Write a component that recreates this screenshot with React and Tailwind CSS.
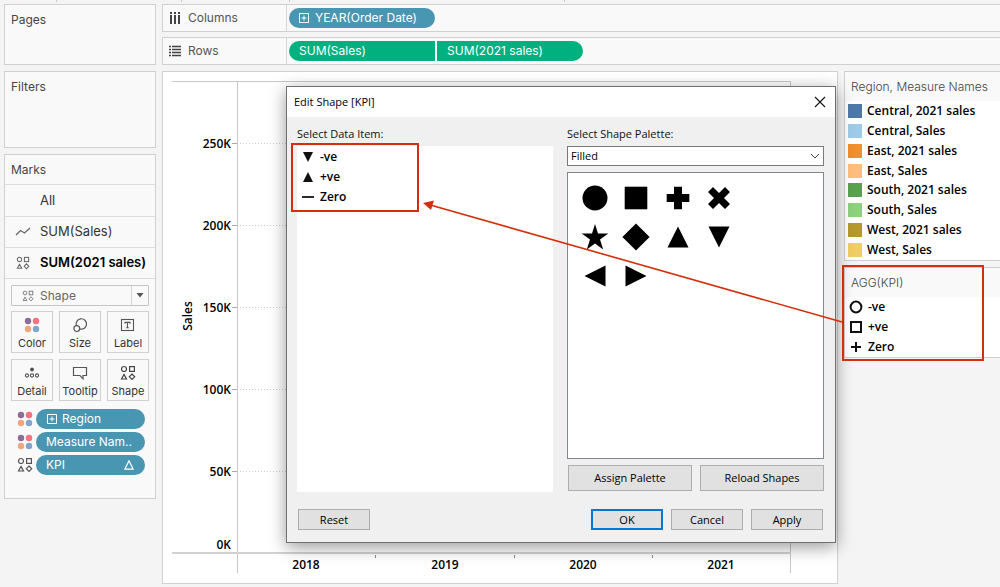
import React from "react";

const DOTS = [
  { cx: 4, cy: 4, fill: "#8a6d96" },
  { cx: 12, cy: 4, fill: "#f6707f" },
  { cx: 4, cy: 12, fill: "#f2a57c" },
  { cx: 12, cy: 12, fill: "#82a5cb" },
];

function ColorIcon() {
  return (
    <svg viewBox="0 0 16 16" className="h-4 w-4 shrink-0" aria-hidden="true">
      {DOTS.map((d) => (
        <circle key={d.fill} cx={d.cx} cy={d.cy} r="3.2" fill={d.fill} />
      ))}
    </svg>
  );
}

function ShapeIcon({ className = "h-4 w-4" }) {
  return (
    <svg viewBox="0 0 16 16" className={`shrink-0 ${className}`} fill="none" stroke="currentColor" strokeWidth="1.2" aria-hidden="true">
      <circle cx="4" cy="4" r="2.5" />
      <rect x="9.6" y="1.6" width="4.8" height="4.8" />
      <path d="M4 9.4 6.5 14H1.5Z" />
      <path d="M12 9 14.7 11.8 12 14.5 9.3 11.8Z" />
    </svg>
  );
}

function LineIcon() {
  return (
    <svg viewBox="0 0 16 10" className="h-[10px] w-4" fill="none" stroke="#666" strokeWidth="1.2" aria-hidden="true">
      <path d="M1 8 5.5 3.5 9.5 6 15 1" />
    </svg>
  );
}

function SizeIcon() {
  return (
    <svg viewBox="0 0 16 16" className="h-4 w-4" fill="none" stroke="#555" strokeWidth="1.2" aria-hidden="true">
      <path d="M4.3 8.4A5.2 5.2 0 1 1 8 12" />
      <circle cx="4.8" cy="11.6" r="2.9" />
    </svg>
  );
}

function LabelIcon() {
  return (
    <svg viewBox="0 0 16 16" className="h-4 w-4" fill="none" stroke="#555" strokeWidth="1.1" aria-hidden="true">
      <rect x="1.5" y="2.5" width="12" height="11" />
      <path d="M5 6.8V5.4H10V6.8M7.5 5.4V10.6M6.2 10.8H8.8" />
    </svg>
  );
}

function DetailIcon() {
  return (
    <svg viewBox="0 0 16 16" className="h-4 w-4" fill="none" stroke="#555" strokeWidth="1.1" aria-hidden="true">
      <circle cx="8" cy="4.5" r="2" fill="#555" stroke="none" />
      <circle cx="3" cy="10.5" r="1.6" />
      <circle cx="8" cy="10.5" r="1.6" />
      <circle cx="13" cy="10.5" r="1.6" />
    </svg>
  );
}

function TooltipIcon() {
  return (
    <svg viewBox="0 0 16 16" className="h-4 w-4" fill="none" stroke="#555" strokeWidth="1.2" aria-hidden="true">
      <path d="M1.5 2.5H14.5V10.5H11V13.8L8 10.5H1.5Z" />
    </svg>
  );
}

function PlusBox() {
  return (
    <svg viewBox="0 0 10 10" className="h-[10px] w-[10px] shrink-0" fill="none" stroke="#fff" strokeWidth="1" aria-hidden="true">
      <path d="M.5 .5H9.5V9.5H.5ZM5 2.5V7.5M2.5 5H7.5" />
    </svg>
  );
}

function Card({ title, className = "" }) {
  return (
    <section className={`border border-[#d0d0d0] bg-[#f9f9f9] px-[6px] py-[7px] ${className}`}>
      <h2 className="text-xs leading-4 text-[#444]">{title}</h2>
    </section>
  );
}

const MARK_BUTTONS = [
  { label: "Color", icon: <ColorIcon /> },
  { label: "Size", icon: <SizeIcon /> },
  { label: "Label", icon: <LabelIcon /> },
  { label: "Detail", icon: <DetailIcon /> },
  { label: "Tooltip", icon: <TooltipIcon /> },
  { label: "Shape", icon: <ShapeIcon className="h-4 w-4 text-[#444]" /> },
];

function MarksCard() {
  return (
    <section className="h-[345px] border border-[#d0d0d0] bg-[#f9f9f9]">
      <h2 className="px-[6px] pt-[7px] pb-[6px] text-xs leading-4 text-[#444]">Marks</h2>
      <button className="flex h-8 w-full items-center border-t border-[#dcdcdc] pl-[35px] text-[13px] text-[#333]">All</button>
      <button className="flex h-[31px] w-full items-center gap-[9px] border-t border-[#dcdcdc] pl-[10px] text-[13px] text-[#333]">
        <LineIcon />
        SUM(Sales)
      </button>
      <button className="flex h-8 w-full items-center gap-[9px] border-y border-[#dcdcdc] pl-[10px] text-[13px] font-semibold text-black">
        <span className="flex w-4 justify-center">
          <ShapeIcon className="h-[14px] w-[14px] text-[#666]" />
        </span>
        SUM(2021 sales)
      </button>
      <div className="px-[6px] pt-[6px]">
        <div className="relative text-[#777]">
          <select aria-label="Mark type" className="block h-[21px] w-full appearance-none rounded-[1px] border border-[#c4c4c4] bg-[#f9f9f9] pl-7 text-xs text-[#666]">
            <option>Shape</option>
          </select>
          <span className="pointer-events-none absolute inset-y-0 left-[11px] flex items-center">
            <ShapeIcon className="h-3 w-3" />
          </span>
          <span className="pointer-events-none absolute inset-y-px right-px flex w-[17px] items-center justify-center border-l border-[#d4d4d4]">
            <svg viewBox="0 0 8 5" className="h-[5px] w-2" aria-hidden="true">
              <path d="M.5 0H7.5L4 4.5Z" fill="#555" />
            </svg>
          </span>
        </div>
        <div className="grid grid-cols-3 gap-[6px] pt-[5px]">
          {MARK_BUTTONS.map((b) => (
            <button key={b.label} className="flex h-[42px] flex-col items-center justify-end gap-[3px] border border-[#d0d0d0] bg-[#f9f9f9] pb-[2px] text-[11px] leading-[14px] text-[#333]">
              {b.icon}
              {b.label}
            </button>
          ))}
        </div>
      </div>
      <ul className="flex flex-col gap-[3px] pt-2 pr-[10px] pl-3 text-xs text-white">
        <li className="flex items-center gap-[3px]">
          <ColorIcon />
          <button className="flex h-5 flex-1 items-center gap-[5px] rounded-full bg-[#4996b2] pl-[11px]">
            <PlusBox />
            Region
          </button>
        </li>
        <li className="flex items-center gap-[3px]">
          <ColorIcon />
          <button className="flex h-5 flex-1 items-center rounded-full bg-[#4996b2] pl-[10px]">Measure Nam..</button>
        </li>
        <li className="flex items-center gap-[3px]">
          <ShapeIcon className="h-4 w-4 text-[#555]" />
          <button className="flex h-5 flex-1 items-center justify-between rounded-full bg-[#4996b2] pr-[11px] pl-[10px]">
            KPI
            <svg viewBox="0 0 10 10" className="h-[10px] w-[10px]" fill="none" stroke="#fff" strokeWidth="1.2" aria-hidden="true">
              <path d="M5 .8 9.2 9.2H.8Z" />
            </svg>
          </button>
        </li>
      </ul>
    </section>
  );
}

function Shelf({ label, icon, children }) {
  return (
    <section className="flex h-7 items-stretch border border-r-0 border-[#d0d0d0] bg-[#f9f9f9]">
      <h2 className="flex w-[124px] items-center gap-[7px] border-r border-[#d4d4d4] pl-[6px] text-xs text-[#555]">
        {icon}
        {label}
      </h2>
      <div className="flex items-center gap-[2px] pl-[2px] text-xs text-white">{children}</div>
    </section>
  );
}

const Y_TICKS = [
  { label: "250K", y: 71.5 },
  { label: "200K", y: 153.5 },
  { label: "150K", y: 235.5 },
  { label: "100K", y: 317.5 },
  { label: "50K", y: 399.5 },
];
const YEARS = [
  { label: "2018", x: 143 },
  { label: "2019", x: 282 },
  { label: "2020", x: 420 },
  { label: "2021", x: 558 },
];

function SalesChart() {
  return (
    <section className="min-w-0 flex-1 border border-[#d0d0d0] bg-white">
      <svg viewBox="0 0 674 511" className="block w-full font-['Open_Sans',sans-serif] text-xs font-semibold" role="img" aria-label="Sales by year">
        <g stroke="#c8c8c8" fill="none">
          <path d="M9 9.5H628" />
          <path d="M74.5 9.5V501" />
          <path d="M627.5 9.5V501" />
          <path d="M9 480.5H628M9 481.5H628" stroke="#d2d2d2" />
        </g>
        {Y_TICKS.map((t) => (
          <g key={t.label}>
            <path d={`M69 ${t.y}H74`} stroke="#aaa" />
            <path d={`M77 ${t.y}H627`} stroke="#ccc" strokeDasharray="1 2" />
            <text x="68" y={t.y + 4.5} textAnchor="end" fill="#000">{t.label}</text>
          </g>
        ))}
        <text x="68" y="477" textAnchor="end" fill="#000">0K</text>
        <path d="M212.5 483V486M351.5 483V486M489.5 483V486" stroke="#888" />
        {YEARS.map((t) => (
          <text key={t.label} x={t.x} y="497" textAnchor="middle" fill="#000">{t.label}</text>
        ))}
        <text transform="translate(29 244) rotate(-90)" textAnchor="middle" fill="#000">Sales</text>
      </svg>
    </section>
  );
}

const REGIONS = [
  { label: "Central, 2021 sales", color: "bg-[#4e79a7]" },
  { label: "Central, Sales", color: "bg-[#a0cbe8]" },
  { label: "East, 2021 sales", color: "bg-[#f28e2b]" },
  { label: "East, Sales", color: "bg-[#ffbe7d]" },
  { label: "South, 2021 sales", color: "bg-[#59a14f]" },
  { label: "South, Sales", color: "bg-[#8cd17d]" },
  { label: "West, 2021 sales", color: "bg-[#b6992d]" },
  { label: "West, Sales", color: "bg-[#f1ce63]" },
];

const KPI_SHAPES = [
  { label: "-ve", shape: <circle cx="7" cy="7" r="5.4" /> },
  { label: "+ve", shape: <rect x="2" y="2" width="10" height="10" /> },
  { label: "Zero", shape: <path d="M7 2V12M2 7H12" /> },
];

function Legends() {
  return (
    <aside className="flex w-[156px] flex-col gap-[6px]">
      <section className="border border-r-0 border-[#d0d0d0] bg-white">
        <h2 className="bg-[#f9f9f9] px-[6px] pt-[7px] pb-[6px] text-xs leading-4 font-light whitespace-nowrap text-[#444]">Region, Measure Names</h2>
        <ul className="flex h-[159px] flex-col font-['Open_Sans',sans-serif] text-xs font-semibold text-black">
          {REGIONS.map((r) => (
            <li key={r.label} className="flex flex-1 items-center gap-[5px] pl-[3px] whitespace-nowrap">
              <span className={`h-[14px] w-[14px] ${r.color}`} />
              {r.label}
            </li>
          ))}
        </ul>
      </section>
      <section className="border border-r-0 border-[#d0d0d0] bg-white">
        <h2 className="bg-[#f9f9f9] px-[6px] pt-[7px] pb-[6px] text-xs leading-4 font-light text-[#444]">AGG(KPI)</h2>
        <ul className="font-['Open_Sans',sans-serif] text-xs font-semibold text-black">
          {KPI_SHAPES.map((s) => (
            <li key={s.label} className="flex h-5 items-center gap-[5px] pl-1">
              <svg viewBox="0 0 14 14" className="h-[14px] w-[14px]" fill="none" stroke="#111" strokeWidth="2" aria-hidden="true">{s.shape}</svg>
              {s.label}
            </li>
          ))}
        </ul>
      </section>
    </aside>
  );
}

const PALETTE = [
  { name: "Circle", shape: <circle cx="14" cy="14" r="12.5" /> },
  { name: "Square", shape: <rect x="2.7" y="2.7" width="22.6" height="22.6" /> },
  { name: "Plus", shape: <path d="M10 2.7H18V10H25.3V18H18V25.3H10V18H2.7V10H10Z" /> },
  { name: "Cross", shape: <path d="M8 3 14 9 20 3 25 8 19 14 25 20 20 25 14 19 8 25 3 20 9 14 3 8Z" /> },
  { name: "Star", shape: <path d="M14 1 17 10.6H27.3L19 16.5 22.2 26.5 14 20.4 5.8 26.5 9 16.5 .7 10.6H11Z" /> },
  { name: "Diamond", shape: <path d="M14 .4 27.6 14 14 27.6 .4 14Z" /> },
  { name: "Triangle up", shape: <path d="M14 3.5 24.5 24.5H3.5Z" /> },
  { name: "Triangle down", shape: <path d="M3.5 3.5H24.5L14 24.5Z" /> },
  { name: "Triangle left", shape: <path d="M24.5 3.5V24.5L3.5 14Z" /> },
  { name: "Triangle right", shape: <path d="M3.5 3.5 24.5 14 3.5 24.5Z" /> },
];

const DATA_ITEMS = [
  { label: "-ve", shape: <path d="M1 1H11L6 11Z" fill="#111" /> },
  { label: "+ve", shape: <path d="M1 11H11L6 1Z" fill="#111" /> },
  { label: "Zero", shape: <path d="M0 6H12" stroke="#111" strokeWidth="1.8" /> },
];

function DialogButton({ children, className = "h-[21px] w-[72px] border border-[#adadad]" }) {
  return <button className={`bg-[#e1e1e1] text-black ${className}`}>{children}</button>;
}

function EditShapeDialog() {
  return (
    <div
      role="dialog"
      aria-labelledby="dialog-title"
      className="absolute top-[86px] left-[286px] flex w-[550px] flex-col border border-[#707070] bg-[#f0f0f0] font-['Open_Sans',sans-serif] text-[11px] leading-[14px] text-[#111] shadow-[0_4px_16px_rgba(0,0,0,0.4)]"
    >
      <header className="flex h-[30px] items-center justify-between bg-white pr-[9px] pl-[7px]">
        <h1 id="dialog-title" className="text-[11px] text-black">Edit Shape [KPI]</h1>
        <button aria-label="Close">
          <svg viewBox="0 0 12 12" className="h-3 w-3" fill="none" stroke="#111" strokeWidth="1.1" aria-hidden="true">
            <path d="M1 1 11 11M11 1 1 11" />
          </svg>
        </button>
      </header>
      <div className="flex gap-[14px] pt-[10px] pr-[11px] pl-[10px]">
        <div className="flex flex-1 flex-col gap-[5px]">
          <h2 id="items-label">Select Data Item:</h2>
          <ul aria-labelledby="items-label" className="h-[346px] bg-white pt-px text-xs font-semibold text-black">
            {DATA_ITEMS.map((d) => (
              <li key={d.label} className="flex h-5 items-center gap-[6px] pl-[5px]">
                <svg viewBox="0 0 12 12" className="h-3 w-3" aria-hidden="true">{d.shape}</svg>
                {d.label}
              </li>
            ))}
          </ul>
        </div>
        <div className="flex w-[257px] flex-col">
          <label htmlFor="palette" className="pb-[5px]">Select Shape Palette:</label>
          <div className="relative">
            <select id="palette" className="block h-5 w-full appearance-none border border-[#7a7a7a] bg-white pl-[3px] text-[11px] text-black">
              <option>Filled</option>
            </select>
            <svg viewBox="0 0 10 6" className="pointer-events-none absolute top-[7px] right-1 h-[6px] w-[10px]" fill="none" stroke="#444" aria-hidden="true">
              <path d="M1 1 5 5 9 1" />
            </svg>
          </div>
          <div className="mt-[6px] h-[287px] border border-[#828790] bg-white p-[6px]">
            <div className="grid h-[116px] w-[166px] grid-cols-4 grid-rows-3">
              {PALETTE.map((p) => (
                <button key={p.name} aria-label={p.name} className="flex items-center justify-center">
                  <svg viewBox="0 0 28 28" className="h-7 w-7" fill="#000" aria-hidden="true">{p.shape}</svg>
                </button>
              ))}
            </div>
          </div>
          <div className="flex gap-2 pt-[6px] pl-px">
            <DialogButton className="h-[26px] flex-1 border border-[#adadad]">Assign Palette</DialogButton>
            <DialogButton className="h-[26px] flex-1 border border-[#adadad]">Reload Shapes</DialogButton>
          </div>
        </div>
      </div>
      <footer className="flex gap-2 pt-[17px] pr-3 pb-3 pl-[11px]">
        <DialogButton>Reset</DialogButton>
        <span className="flex-1" />
        <DialogButton className="h-[21px] w-[72px] border-2 border-[#0078d7]">OK</DialogButton>
        <DialogButton>Cancel</DialogButton>
        <DialogButton>Apply</DialogButton>
      </footer>
    </div>
  );
}

function Annotations() {
  return (
    <svg viewBox="0 0 1000 587" width="1000" height="587" className="pointer-events-none absolute top-0 left-0" fill="none" stroke="#d42f0c" strokeWidth="2" aria-hidden="true">
      <rect x="292" y="144" width="126" height="67" />
      <rect x="843" y="266" width="140" height="94" />
      <path d="M842 322 432 205.5" strokeWidth="1.6" />
      <path d="M423 203 434 200.5 431 210Z" fill="#d42f0c" stroke="none" />
    </svg>
  );
}

export default function App() {
  return (
    <div className="relative min-h-screen bg-[#f4f4f4] pb-1 pl-1 font-['Inter',sans-serif]">
      <div className="flex h-1" aria-hidden="true">
        <span className="mb-[2px] w-[53px] border-r border-[#ccc]" />
        <span className="mb-[2px] w-[125px] border-r border-[#ccc]" />
        <span className="mb-[2px] w-[108px] border-r border-[#ccc]" />
        <span className="mb-[2px] w-[275px] border-r border-[#ccc]" />
      </div>
      <div className="flex gap-[6px]">
        <aside className="flex w-[152px] flex-col gap-[6px]">
          <Card title="Pages" className="h-[61px]" />
          <Card title="Filters" className="h-[77px]" />
          <MarksCard />
        </aside>
        <main className="flex min-w-0 flex-1 flex-col gap-[6px]">
          <div className="flex flex-col gap-[5px]">
            <Shelf
              label="Columns"
              icon={
                <svg viewBox="0 0 12 12" className="h-3 w-3" fill="none" stroke="#444" strokeWidth="2" aria-hidden="true">
                  <path d="M2 0V2M6 0V2M10 0V2M2 3V12M6 3V12M10 3V12" />
                </svg>
              }
            >
              <button className="flex h-5 w-[146px] items-center gap-[6px] rounded-full bg-[#4996b2] pl-[10px]">
                <PlusBox />
                YEAR(Order Date)
              </button>
            </Shelf>
            <Shelf
              label="Rows"
              icon={
                <svg viewBox="0 0 12 12" className="h-3 w-3" fill="none" stroke="#444" strokeWidth="1.3" aria-hidden="true">
                  <path d="M0 1.5H2M3 1.5H12M0 4.5H2M3 4.5H12M0 7.5H2M3 7.5H12M0 10.5H2M3 10.5H12" />
                </svg>
              }
            >
              <button className="flex h-5 w-[146px] items-center rounded-l-full bg-[#00b180] pl-[10px]">SUM(Sales)</button>
              <button className="flex h-5 w-[146px] items-center rounded-r-full bg-[#00b180] pl-[10px]">SUM(2021 sales)</button>
            </Shelf>
          </div>
          <div className="flex items-start gap-[6px]">
            <SalesChart />
            <Legends />
          </div>
        </main>
      </div>
      <EditShapeDialog />
      <Annotations />
    </div>
  );
}
